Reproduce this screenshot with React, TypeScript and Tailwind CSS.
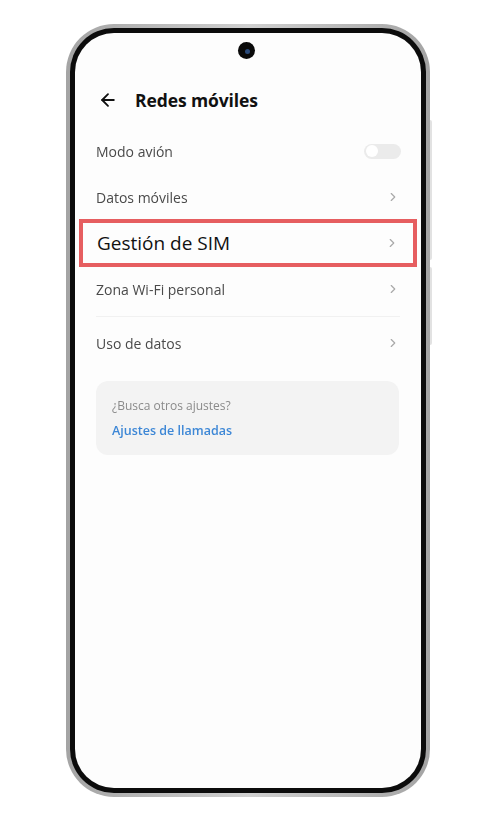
import { ArrowLeft, ChevronRight } from "lucide-react";

const rowText = "text-[14px] font-medium text-[#4a4a4a] blur-[0.5px]";

function Chevron() {
  return <ChevronRight className="w-[14px] h-[14px] text-[#a9a9a9] blur-[0.3px]" strokeWidth={2} />;
}

export default function App() {
  return (
    <div className="w-[495px] h-[832px] bg-white pt-[24px] pl-[66px] font-['Open_Sans',sans-serif]">
      {/* Phone frame */}
      <div className="relative w-[364px] h-[773px] rounded-[48px] bg-gradient-to-r from-[#a4a4a4] via-[#d0d0d0] to-[#a4a4a4] p-[4px]">
        {/* side buttons */}
        <div className="absolute right-[-2px] top-[96px] w-[2px] h-[140px] rounded-r bg-[#e2e2e2]" />
        <div className="absolute right-[-2px] top-[243px] w-[2px] h-[78px] rounded-r bg-[#e2e2e2]" />

        <div className="w-full h-full rounded-[44px] bg-[#0c0c0c] p-[5px]">
          <div className="relative w-full h-full rounded-[39px] bg-[#fdfdfd] overflow-hidden">
            {/* camera */}
            <div className="absolute left-[163px] top-[9px] w-[17px] h-[17px] rounded-full bg-[#0a0a0a] flex items-center justify-center">
              <div className="w-[5px] h-[5px] rounded-full bg-[#2a4a7a] translate-x-[1px] translate-y-[1px]" />
            </div>

            {/* Header */}
            <div className="mt-[45px] h-[44px] flex items-center pl-[23px] gap-[17px]">
              <ArrowLeft className="w-[20px] h-[20px] text-[#111]" strokeWidth={2.2} />
              <h1 className="text-[17.5px] font-bold text-[#111] tracking-[-0.1px]">Redes móviles</h1>
            </div>

            <div className="mt-[6px] px-[4px]">
              <div className="h-[46px] flex items-center justify-between pl-[17px] pr-[16px]">
                <span className={rowText}>Modo avión</span>
                <div className="w-[37px] h-[15px] rounded-full bg-[#ebebeb] p-[2px] flex items-center blur-[0.4px]">
                  <div className="w-[12px] h-[12px] rounded-full bg-white" />
                </div>
              </div>
              <div className="h-[46px] flex items-center justify-between pl-[17px] pr-[17px]">
                <span className={rowText}>Datos móviles</span>
                <Chevron />
              </div>
              <div className="h-[48px] -my-[1px] flex items-center justify-between border-[4px] border-[#e65e60] pl-[14px] pr-[14px]">
                <span className="text-[19px] text-[#111]">Gestión de SIM</span>
                <Chevron />
              </div>
              <div className="h-[46px] flex items-center justify-between pl-[17px] pr-[17px]">
                <span className={rowText}>Zona Wi-Fi personal</span>
                <Chevron />
              </div>
              <div className="h-[8px] flex items-center px-[17px]">
                <div className="w-full h-px bg-[#f1f1f1]" />
              </div>
              <div className="h-[46px] flex items-center justify-between pl-[17px] pr-[17px]">
                <span className={rowText}>Uso de datos</span>
                <Chevron />
              </div>

              {/* Card */}
              <div className="mt-[15px] ml-[17px] mr-[18px] h-[74px] rounded-[12px] bg-[#f3f3f3] px-[16px] pt-[16px] flex flex-col gap-[8px] blur-[0.5px]">
                <span className="text-[12px] text-[#8a8a8a] leading-[17px]">¿Busca otros ajustes?</span>
                <span className="text-[12.5px] font-semibold text-[#3d87d6] leading-[17px]">Ajustes de llamadas</span>
              </div>
            </div>
          </div>
        </div>
      </div>
    </div>
  );
}
